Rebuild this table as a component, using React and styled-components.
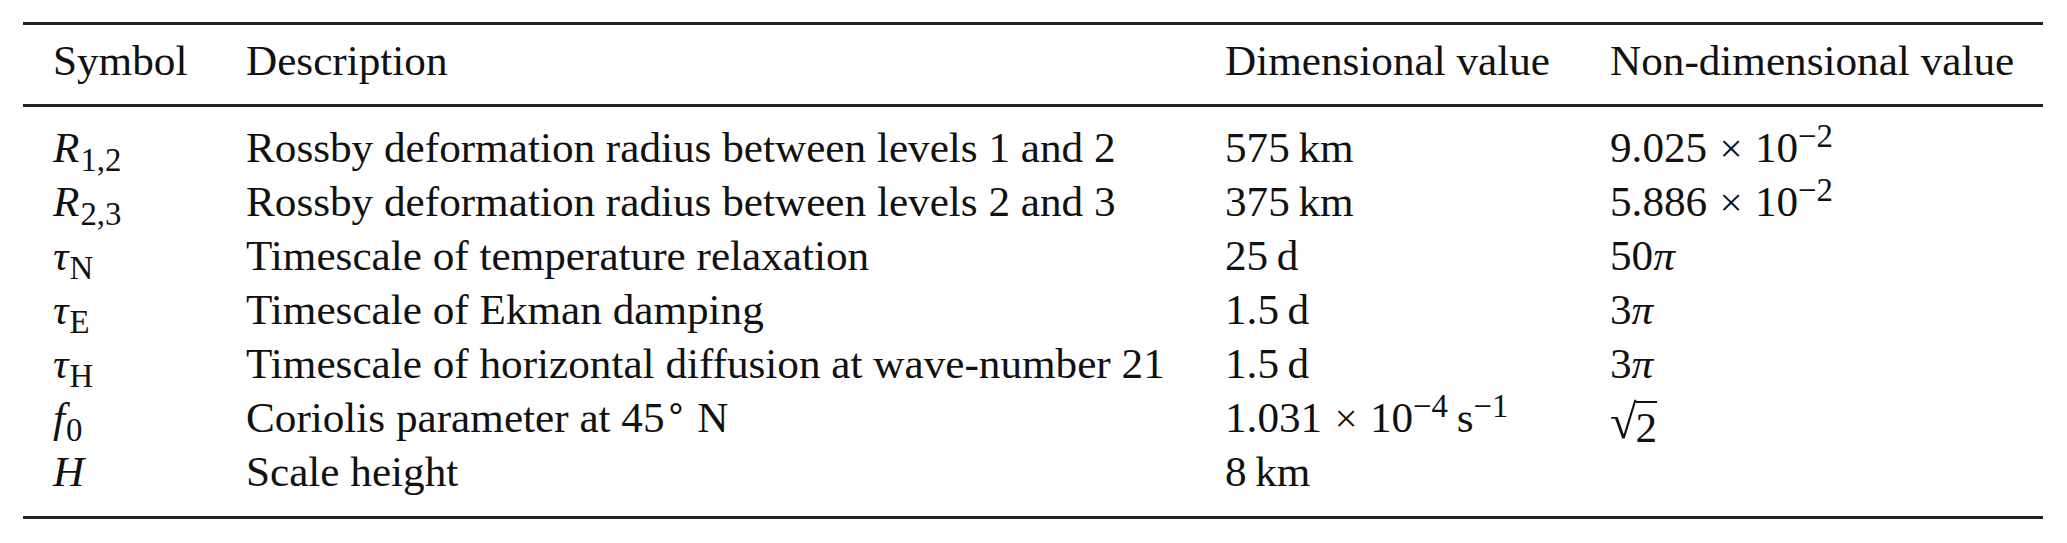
import React from 'react';
import styled, { createGlobalStyle } from 'styled-components';

const GlobalStyle = createGlobalStyle`
  html, body {
    margin: 0;
    padding: 0;
    background: #fff;
  }
  body {
    font-family: "Liberation Serif", "Times New Roman", serif;
    color: #111;
  }
`;

const Page = styled.div`
  padding: 22px 0 0 23px;
`;

const Table = styled.div`
  width: 2020px;
  border-top: 3px solid #222;
  border-bottom: 3px solid #222;
  font-size: 43.2px;
`;

const Head = styled.div`
  padding: 9px 0 16px;
  border-bottom: 3px solid #222;
`;

const Body = styled.div`
  padding: 14px 0 17px;
`;

const Row = styled.div`
  display: grid;
  grid-template-columns: 193px 979px 385px 1fr;
  padding-left: 30px;
  height: 54px;
  line-height: 54px;
  white-space: nowrap;
`;

const Cell = styled.div`
  overflow: visible;
`;

const Italic = styled.span`
  font-style: italic;
`;

const Sub = styled.span`
  font-size: 0.76em;
  line-height: 0;
  vertical-align: -9px;
  margin-left: 1px;
`;

const Sup = styled.span`
  font-size: 0.76em;
  line-height: 0;
  vertical-align: 15px;
`;

const Unit = styled.span`
  margin-left: 0.2em;
`;

const Times = styled.span`
  margin: 0 0.3em;
  font-size: 0.95em;
`;

const Degree = styled.span`
  font-size: 0.8em;
  line-height: 0;
  vertical-align: 13px;
`;

const Radical = styled.span`
  display: inline-flex;
  align-items: flex-start;
  line-height: 1;
  vertical-align: -6px;
`;

const RadSign = styled.span`
  font-size: 1.12em;
  margin-top: -3px;
`;

const Radicand = styled.span`
  border-top: 2px solid #111;
  padding-top: 3px;
  margin-left: -1px;
`;

const rows = [
  {
    symbol: <><Italic>R</Italic><Sub>1,2</Sub></>,
    desc: 'Rossby deformation radius between levels 1 and 2',
    dim: <>575<Unit>km</Unit></>,
    nondim: <>9.025<Times>×</Times>10<Sup>−2</Sup></>,
  },
  {
    symbol: <><Italic>R</Italic><Sub>2,3</Sub></>,
    desc: 'Rossby deformation radius between levels 2 and 3',
    dim: <>375<Unit>km</Unit></>,
    nondim: <>5.886<Times>×</Times>10<Sup>−2</Sup></>,
  },
  {
    symbol: <><Italic>τ</Italic><Sub>N</Sub></>,
    desc: 'Timescale of temperature relaxation',
    dim: <>25<Unit>d</Unit></>,
    nondim: <>50<Italic>π</Italic></>,
  },
  {
    symbol: <><Italic>τ</Italic><Sub>E</Sub></>,
    desc: 'Timescale of Ekman damping',
    dim: <>1.5<Unit>d</Unit></>,
    nondim: <>3<Italic>π</Italic></>,
  },
  {
    symbol: <><Italic>τ</Italic><Sub>H</Sub></>,
    desc: 'Timescale of horizontal diffusion at wave-number 21',
    dim: <>1.5<Unit>d</Unit></>,
    nondim: <>3<Italic>π</Italic></>,
  },
  {
    symbol: <><Italic>f</Italic><Sub>0</Sub></>,
    desc: <>Coriolis parameter at 45<Degree>∘</Degree> N</>,
    dim: <>1.031<Times>×</Times>10<Sup>−4</Sup><Unit>s</Unit><Sup>−1</Sup></>,
    nondim: <Radical><RadSign>√</RadSign><Radicand>2</Radicand></Radical>,
  },
  {
    symbol: <Italic>H</Italic>,
    desc: 'Scale height',
    dim: <>8<Unit>km</Unit></>,
    nondim: null,
  },
];

export default function App() {
  return (
    <>
      <GlobalStyle />
      <Page>
        <Table>
          <Head>
            <Row>
              <Cell>Symbol</Cell>
              <Cell>Description</Cell>
              <Cell>Dimensional value</Cell>
              <Cell>Non-dimensional value</Cell>
            </Row>
          </Head>
          <Body>
            {rows.map((r, i) => (
              <Row key={i}>
                <Cell>{r.symbol}</Cell>
                <Cell>{r.desc}</Cell>
                <Cell>{r.dim}</Cell>
                <Cell>{r.nondim}</Cell>
              </Row>
            ))}
          </Body>
        </Table>
      </Page>
    </>
  );
}
